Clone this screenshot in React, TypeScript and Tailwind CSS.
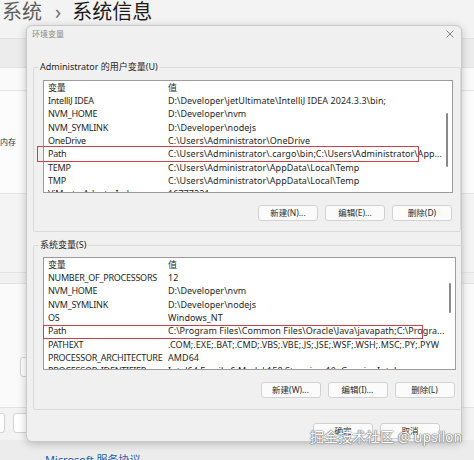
import React from "react";

type Row = [string, string];

const userRows: Row[] = [
  ["IntelliJ IDEA", "D:\\Developer\\jetUltimate\\IntelliJ IDEA 2024.3.3\\bin;"],
  ["NVM_HOME", "D:\\Developer\\nvm"],
  ["NVM_SYMLINK", "D:\\Developer\\nodejs"],
  ["OneDrive", "C:\\Users\\Administrator\\OneDrive"],
  ["Path", "C:\\Users\\Administrator\\.cargo\\bin;C:\\Users\\Administrator\\App..."],
  ["TEMP", "C:\\Users\\Administrator\\AppData\\Local\\Temp"],
  ["TMP", "C:\\Users\\Administrator\\AppData\\Local\\Temp"],
  ["ViMasterAdapterIndex", "16777221"],
];

const sysRows: Row[] = [
  ["NUMBER_OF_PROCESSORS", "12"],
  ["NVM_HOME", "D:\\Developer\\nvm"],
  ["NVM_SYMLINK", "D:\\Developer\\nodejs"],
  ["OS", "Windows_NT"],
  ["Path", "C:\\Program Files\\Common Files\\Oracle\\Java\\javapath;C:\\Progra..."],
  ["PATHEXT", ".COM;.EXE;.BAT;.CMD;.VBS;.VBE;.JS;.JSE;.WSF;.WSH;.MSC;.PY;.PYW"],
  ["PROCESSOR_ARCHITECTURE", "AMD64"],
  ["PROCESSOR_IDENTIFIER", "Intel64 Family 6 Model 158 Stepping 10, GenuineIntel"],
];

function VarList({ rows, thumb, top }: { rows: Row[]; thumb: string; top: string }) {
  return (
    <div className={`${top} ml-[9px] mr-[7px] h-[113px] border border-[#9c9c9c] bg-white flex overflow-hidden`}>
      <div className="flex-1 min-w-0 overflow-hidden pl-[4px]">
        {[["变量", "值"] as Row, ...rows].map(([k, v], i) => (
          <div
            key={i}
            className="h-[13.35px] flex items-center whitespace-nowrap text-[9px] leading-[12px] text-[#1f1f1f]"
          >
            <span className="w-[120px] shrink-0 tracking-[-0.25px]">{k}</span>
            <span className="tracking-[0.05px]">{v}</span>
          </div>
        ))}
      </div>
      <div className="w-[10px] shrink-0 flex justify-center">
        <div className={`w-[2px] bg-[#8a8a8a] rounded-full ${thumb}`} />
      </div>
    </div>
  );
}

function Btn({ label }: { label: string }) {
  return (
    <div className="w-[60px] h-[16px] flex items-center justify-center bg-[#fbfbfb] border border-[#d2d2d2] rounded-[3px] text-[8.5px] leading-[12px] text-[#2b2b2b]">
      {label}
    </div>
  );
}

export default function App() {
  return (
    <div className="relative w-[474px] h-[460px] overflow-hidden bg-[#f3f3f3] font-['Noto_Sans','Noto_Sans_CJK_SC',sans-serif]">
      {/* background settings page */}
      <div className="flex flex-col">
        <div className="h-[26px] flex items-start pl-[2px] text-[20px] leading-[24px]">
          <span className="text-[#5e5e5e]">系统</span>
          <span className="ml-[13px] mr-[11px] text-[#707070]">›</span>
          <span className="text-[#1b1b1b]">系统信息</span>
        </div>
        <div className="h-[12px] bg-[#f3f3f3]" />
        <div className="h-[29px] bg-[#ececec] border-t border-[#e2e2e2]" />
        <div className="h-[23px] bg-[#fafafa] border-t border-[#e2e2e2]" />
        <div className="h-[103px] bg-[#fcfcfc] border-t border-[#e4e4e4] pt-[46px]">
          <span className="block text-[8px] leading-[10px] text-[#333]">内存</span>
        </div>
        <div className="h-[79px] bg-[#f4f4f4] border-t border-[#e4e4e4]" />
        <div className="h-[11px] bg-[#f1f1f1] border-t border-[#e2e2e2]" />
        <div className="h-[124px] bg-[#fafafa] border-t border-[#e2e2e2] pt-[73px]">
          <div className="ml-[20px] w-[50px] h-[20px] border border-[#d4d4d4] rounded-[3px] bg-white" />
        </div>
        <div className="h-[33px] bg-[#f3f3f3] border-t border-[#e2e2e2] flex items-start pt-[5px]">
          <div className="w-[5px] h-[20px] border border-l-0 border-[#d4d4d4] rounded-r-[3px] bg-white" />
          <div className="ml-[8px] w-[60px] h-[20px] border border-[#d4d4d4] rounded-[3px] bg-white" />
        </div>
        <div className="h-[30px] bg-[#ececec] pl-[45px] pt-[6px]">
          <span className="text-[11px] leading-[14px] text-[#1d5fae]">Microsoft 服务协议</span>
        </div>
      </div>

      {/* environment variables dialog */}
      <div className="absolute left-[26px] top-[25px] w-[436px] flex flex-col bg-[#f0f0f0] border border-[#c9c9c9] rounded-[6px] shadow-[0_2px_8px_rgba(0,0,0,0.22)]">
        <div className="h-[19px] flex items-start justify-between pt-[3px] pl-[5px] pr-[7px]">
          <span className="text-[8px] leading-[10px] text-[#8a8a8a]">环境变量</span>
          <svg width="8" height="8" viewBox="0 0 8 8" className="mt-[1px]">
            <path d="M0.5 0.5 L7.5 7.5 M7.5 0.5 L0.5 7.5" stroke="#7a7a7a" strokeWidth="0.9" fill="none" />
          </svg>
        </div>
        <div className="pl-[6px] pr-[9px] pt-[16px] pb-[2px] flex flex-col">
          <fieldset className="border border-[#dadada] rounded-[2px] pb-[10px]">
            <legend className="ml-[4px] px-[2px] text-[9px] leading-[12px] text-[#1f1f1f]">
              Administrator 的用户变量(U)
            </legend>
            <VarList rows={userRows} top="mt-[7px]" thumb="mt-[32px] h-[54px]" />
            <div className="mt-[12px] pr-[8px] flex justify-end gap-[7px]">
              <Btn label="新建(N)..." />
              <Btn label="编辑(E)..." />
              <Btn label="删除(D)" />
            </div>
          </fieldset>
          <fieldset className="mt-[7px] border border-[#dadada] rounded-[2px] pb-[11px]">
            <legend className="ml-[4px] px-[2px] text-[9px] leading-[12px] text-[#1f1f1f]">
              系统变量(S)
            </legend>
            <VarList rows={sysRows} top="mt-[6px]" thumb="mt-[25px] h-[30px]" />
            <div className="mt-[12px] pr-[8px] flex justify-end gap-[7px]">
              <Btn label="新建(W)..." />
              <Btn label="编辑(I)..." />
              <Btn label="删除(L)" />
            </div>
          </fieldset>
          <div className="mt-[13px] pr-[12px] flex justify-end gap-[7px]">
            <Btn label="确定" />
            <Btn label="取消" />
          </div>
        </div>
      </div>

      {/* red annotation boxes */}
      <div className="absolute left-[37px] top-[146px] w-[382px] h-[16px] border-[1.5px] border-[#c7434e]" />
      <div className="absolute left-[43px] top-[325px] w-[380px] h-[14px] border-[1.5px] border-[#c7434e]" />

      {/* watermark */}
      <div className="absolute left-[310px] top-[428px] text-[14px] leading-[18px] text-white whitespace-nowrap [text-shadow:0_0_1px_#666,0_0_1px_#666,0_0_2px_#888]">
        掘金技术社区 @ upsilon
      </div>
    </div>
  );
}
